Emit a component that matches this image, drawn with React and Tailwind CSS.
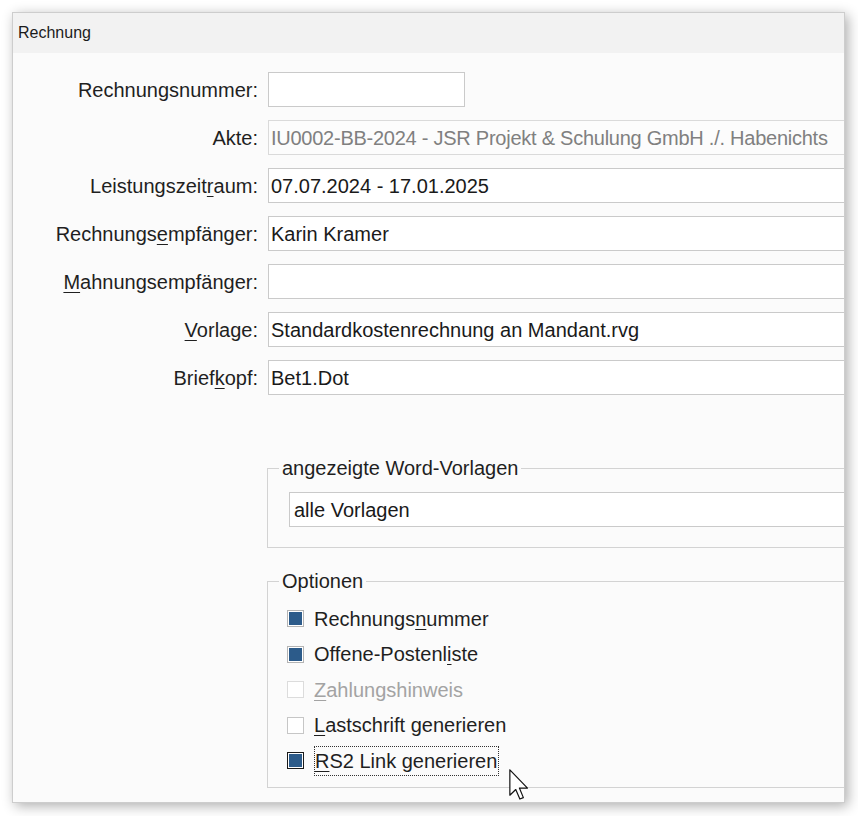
import React from 'react'

const FONT = "font-['Liberation_Sans',Arial,sans-serif]"

// label with one underlined accelerator letter at index `at`
function Accel({ text, at }) {
  if (at === undefined) return text
  return (
    <>
      {text.slice(0, at)}
      <u className="underline underline-offset-[3px] decoration-1">{text[at]}</u>
      {text.slice(at + 1)}
    </>
  )
}

const FIELDS = [
  { label: 'Rechnungsnummer:', value: '', short: true },
  { label: 'Akte:', value: 'IU0002-BB-2024 - JSR Projekt & Schulung GmbH ./. Habenichts', disabled: true },
  { label: 'Leistungszeitraum:', at: 13, value: '07.07.2024 - 17.01.2025' },
  { label: 'Rechnungsempfänger:', at: 9, value: 'Karin Kramer' },
  { label: 'Mahnungsempfänger:', at: 0, value: '' },
  { label: 'Vorlage:', at: 0, value: 'Standardkostenrechnung an Mandant.rvg' },
  { label: 'Briefkopf:', at: 5, value: 'Bet1.Dot' },
]

const OPTIONS = [
  { label: 'Rechnungsnummer', at: 9, checked: true },
  { label: 'Offene-Postenliste', at: 14, checked: true },
  { label: 'Zahlungshinweis', at: 0, disabled: true },
  { label: 'Lastschrift generieren', at: 0 },
  { label: 'RS2 Link generieren', at: 0, checked: true, focused: true },
]

function Field({ label, at, value, short, disabled }) {
  return (
    <div className="flex h-[35px] items-center gap-[10px]">
      <div className="w-[245px] flex-none text-right text-[20px] leading-[24px] text-[#1f1f1f]">
        <Accel text={label} at={at} />
      </div>
      <div
        className={`flex h-[35px] flex-none items-center pl-[2px] text-[20px] leading-[24px] ${
          short ? 'w-[197px]' : 'w-[640px]'
        } ${
          disabled
            ? 'border border-[#dadada] bg-[#fcfcfc] tracking-[-0.25px] text-[#808080]'
            : 'border border-[#cacaca] bg-white text-[#1a1a1a]'
        }`}
      >
        {value}
      </div>
    </div>
  )
}

function Checkbox({ checked, disabled, focused }) {
  const border = focused ? 'border-[#1a1a1a]' : disabled ? 'border-[#dcdcdc]' : checked ? 'border-[#b4b4b4]' : 'border-[#c6c6c6]'
  return (
    <div className={`flex h-[17px] w-[17px] flex-none items-center justify-center border bg-white ${border}`}>
      {checked && <div className="h-[13px] w-[13px] bg-[#2c5b8a]" />}
    </div>
  )
}

function GroupBox({ title, children, className }) {
  return (
    <fieldset className={`ml-[254px] w-[700px] border border-[#d3d3d3] p-0 ${className}`}>
      <legend className="ml-[11px] px-[3px] text-[20px] leading-[24px] text-[#1f1f1f]">{title}</legend>
      {children}
    </fieldset>
  )
}

function Cursor() {
  return (
    <svg
      className="absolute left-[496px] top-[756px]"
      width="20"
      height="31"
      viewBox="0 0 12.5 19.5"
    >
      <path
        d="M0.5 0.5 L0.5 16.5 L4.2 12.9 L6.8 18.9 L9 18 L6.5 12 L11.6 12 Z"
        fill="#fff"
        stroke="#111"
        strokeWidth="0.75"
        strokeLinejoin="round"
      />
    </svg>
  )
}

export default function App() {
  return (
    <div className={`min-h-screen bg-white pl-[12px] pt-[12px] ${FONT}`}>
      <div className="relative h-[791px] w-[833px] overflow-hidden border border-[#cdcdcd] bg-[#fbfbfb] shadow-[3px_3px_12px_rgba(0,0,0,0.32)]">
        <div className="flex h-[40px] items-center bg-[#f2f2f2] pl-[5px] text-[16px] text-[#1b1b1b]">
          Rechnung
        </div>

        <div className="pt-[19px]">
          <div className="flex flex-col gap-[13px]">
            {FIELDS.map((f) => (
              <Field key={f.label} {...f} />
            ))}
          </div>

          <GroupBox title="angezeigte Word-Vorlagen" className="mt-[61px]">
            <div className="pb-[20px] pl-[21px] pt-[12px]">
              <div className="flex h-[35px] items-center border border-[#cacaca] bg-white pl-[4px] text-[20px] leading-[24px] text-[#1a1a1a]">
                alle Vorlagen
              </div>
            </div>
          </GroupBox>

          <GroupBox title="Optionen" className="mt-[21px]">
            <div className="pb-[8px] pl-[19px] pt-[8px]">
              {OPTIONS.map((o) => (
                <div key={o.label} className="flex h-[35.5px] items-center gap-[10px]">
                  <Checkbox checked={o.checked} disabled={o.disabled} focused={o.focused} />
                  <span
                    className={`text-[20px] leading-[24px] ${
                      o.disabled ? 'text-[#a3a3a3]' : 'text-[#1f1f1f]'
                    } ${o.focused ? 'flex h-[30px] items-center border border-dotted border-[#333] pr-[1px]' : ''}`}
                  >
                    <Accel text={o.label} at={o.at} />
                  </span>
                </div>
              ))}
            </div>
          </GroupBox>
        </div>

        <Cursor />
      </div>
    </div>
  )
}
